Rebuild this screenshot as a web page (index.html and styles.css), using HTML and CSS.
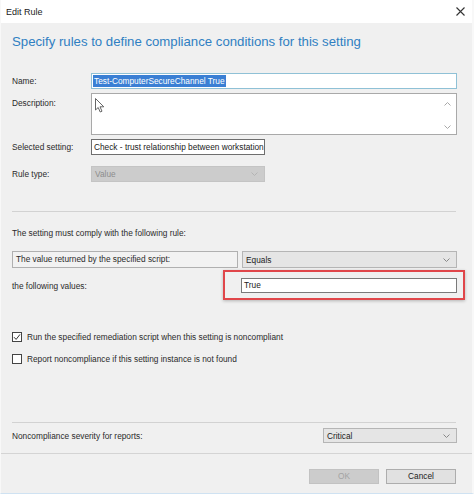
FILE: index.html
```html
<!DOCTYPE html>
<html>
<head>
<meta charset="utf-8">
<link rel="stylesheet" href="styles.css">
</head>
<body>
<div class="window">
  <div class="titlebar">
    <span class="title">Edit Rule</span>
    <svg class="close" width="9" height="9" viewBox="0 0 9 9"><path d="M0.5 0.5 L8.5 8.5 M8.5 0.5 L0.5 8.5" stroke="#333" stroke-width="1.1" fill="none"/></svg>
  </div>
  <div class="dialog">
    <div class="content">
      <div class="heading">Specify rules to define compliance conditions for this setting</div>

      <div class="row row-name">
        <div class="label">Name:</div>
        <div class="field field-focus"><span class="sel">Test-ComputerSecureChannel True</span></div>
      </div>
      <div class="row row-desc">
        <div class="label label-top">Description:</div>
        <div class="field field-area">
          <svg class="cursor" width="10" height="15" viewBox="0 0 10 15"><path d="M0.5 0.5 L0.5 12 L3.2 9.5 L5.2 14 L7 13.2 L5 8.8 L8.8 8.8 Z" fill="#fff" stroke="#555" stroke-width="0.9" stroke-linejoin="round"/></svg>
          <svg class="scroll scroll-up" width="7" height="4" viewBox="0 0 7 4"><path d="M0.5 3.5 L3.5 0.5 L6.5 3.5" stroke="#a8a8a8" fill="none"/></svg>
          <svg class="scroll scroll-down" width="7" height="4" viewBox="0 0 7 4"><path d="M0.5 0.5 L3.5 3.5 L6.5 0.5" stroke="#a8a8a8" fill="none"/></svg>
        </div>
      </div>
      <div class="row row-selected">
        <div class="label">Selected setting:</div>
        <div class="field field-short">Check - trust relationship between workstation</div>
      </div>
      <div class="row row-type">
        <div class="label">Rule type:</div>
        <div class="combo combo-disabled field-short"><span>Value</span>
          <svg width="7" height="4" viewBox="0 0 7 4"><path d="M0.5 0.5 L3.5 3.5 L6.5 0.5" stroke="#b4b4b4" fill="none"/></svg>
        </div>
      </div>

      <div class="sep sep-1"></div>
      <div class="text text-comply">The setting must comply with the following rule:</div>

      <div class="row row-script">
        <div class="box-static">The value returned by the specified script:</div>
        <div class="combo combo-wide"><span>Equals</span>
          <svg width="7" height="4" viewBox="0 0 7 4"><path d="M0.5 0.5 L3.5 3.5 L6.5 0.5" stroke="#888" fill="none"/></svg>
        </div>
      </div>
      <div class="row row-values">
        <div class="label-wide">the following values:</div>
        <div class="highlight-wrap">
          <div class="field field-value">True</div>
        </div>
      </div>

      <div class="check-row check-1">
        <span class="checkbox"><svg width="8" height="8" viewBox="0 0 8 8"><path d="M1 4.2 L3.1 6.4 L7 1.4" stroke="#333" stroke-width="1" fill="none"/></svg></span>
        <span>Run the specified remediation script when this setting is noncompliant</span>
      </div>
      <div class="check-row check-2">
        <span class="checkbox"></span>
        <span>Report noncompliance if this setting instance is not found</span>
      </div>

      <div class="sep sep-2"></div>
      <div class="row row-severity">
        <div class="label-wide">Noncompliance severity for reports:</div>
        <div class="combo combo-severity"><span>Critical</span>
          <svg width="7" height="4" viewBox="0 0 7 4"><path d="M0.5 0.5 L3.5 3.5 L6.5 0.5" stroke="#888" fill="none"/></svg>
        </div>
      </div>
    </div>
    <div class="footer">
      <div class="btn btn-disabled">OK</div>
      <div class="btn">Cancel</div>
    </div>
  </div>
</div>
</body>
</html>
```
FILE: styles.css
```css
* { box-sizing: border-box; }
html, body { margin: 0; padding: 0; }
body {
  width: 474px;
  height: 494px;
  overflow: hidden;
  font-family: "Liberation Sans", Arial, sans-serif;
  font-size: 8.3px;
  color: #222;
  background: #f0f0f0;
}
.window {
  width: 474px;
  height: 494px;
  display: flex;
  flex-direction: column;
  border-left: 1px solid #f8f8f8;
  border-right: 2px solid #f8f8f8;
  border-bottom: 1px solid #cfe2f2;
}
.titlebar {
  height: 23px;
  flex: none;
  background: #fff;
  display: flex;
  align-items: center;
  justify-content: space-between;
  padding: 0 6px 0 5px;
}
.title { font-size: 9px; color: #222; }
.close { margin-right: 1px; }
.dialog {
  flex: 1;
  display: flex;
  flex-direction: column;
  background: #f0f0f0;
}
.content {
  padding: 0 15px 10px 11px;
}
.heading {
  padding-top: 12px;
  font-size: 13.2px;
  line-height: 14px;
  color: #2f7fc2;
  white-space: nowrap;
}
.row { display: flex; align-items: center; }
.label { width: 79px; flex: none; line-height: 10px; color: #2a2a2a; }
.label-top { align-self: flex-start; padding-top: 5px; }
.label-wide { flex: 1; color: #2a2a2a; line-height: 10px; }
.field {
  background: #fff;
  border: 1px solid #8c8c8c;
  height: 16px;
  line-height: 14px;
  padding: 0 2px;
  white-space: nowrap;
  overflow: hidden;
}
.row-name { margin-top: 24px; }
.row-name .field { flex: 1; }
.field-focus { border-color: #8fc1d6; padding: 1px 1px; line-height: 12px; }
.sel { display: inline-block; background: #3a7fd4; color: #fff; padding: 0 1px; height: 12px; }
.row-desc { margin-top: 4px; }
.field-area {
  flex: 1;
  height: 42px;
  border-color: #a9a9a9;
  position: relative;
}
.cursor { position: absolute; left: 3px; top: 4px; }
.scroll { position: absolute; right: 5px; }
.scroll-up { top: 8px; }
.scroll-down { bottom: 5px; }
.row-selected { margin-top: 4px; }
.field-short { width: 174px; flex: none; }
.row-selected .field { border-color: #6e6e6e; color: #222; }
.row-type { margin-top: 11px; }
.combo {
  height: 16px;
  display: flex;
  align-items: center;
  justify-content: space-between;
  padding: 0 6px 0 3px;
  border: 1px solid #b5b5b5;
  background: #e5e5e5;
}
.combo-disabled { background: #cccccc; border-color: #c4c4c4; color: #8c8c8c; }
.sep { height: 1px; background: #d2d2d2; margin-right: 1px; }
.sep-1 { margin-top: 29px; }
.text-comply { margin-top: 15px; line-height: 12px; color: #2a2a2a; }
.row-script { margin-top: 12px; }
.box-static {
  width: 226px;
  height: 17px;
  border: 1px solid #b0b0b0;
  background: #f2f2f2;
  line-height: 15px;
  padding: 0 3px;
  color: #2a2a2a;
  flex: none;
}
.combo-wide { flex: 1; margin-left: 4px; height: 17px; }
.row-values { margin-top: 10px; }
.highlight-wrap {
  width: 216px;
  flex: none;
  position: relative;
}
.highlight-wrap::after {
  content: "";
  position: absolute;
  left: -18px;
  right: -8px;
  top: -8px;
  bottom: -7px;
  border: 2px solid #e0464a;
  box-shadow: 0 1px 3px rgba(0,0,0,0.25);
  pointer-events: none;
}
.field-value { height: 15px; line-height: 13px; border-color: #7a7a7a; }
.check-row { display: flex; align-items: center; height: 12px; color: #2a2a2a; }
.check-1 { margin-top: 38px; }
.check-2 { margin-top: 10px; }
.checkbox {
  width: 10px;
  height: 10px;
  border: 1px solid #444;
  background: #fff;
  margin-right: 5px;
  display: flex;
  align-items: center;
  justify-content: center;
  flex: none;
}
.sep-2 { margin-top: 57px; }
.row-severity { margin-top: 5px; }
.combo-severity { width: 134px; flex: none; height: 15px; }
.footer {
  flex: 1;
  border-top: 1px solid #d4d4d4;
  display: flex;
  justify-content: flex-end;
  align-items: flex-start;
  padding: 15px 16px 0 0;
  gap: 7px;
}
.btn {
  width: 70px;
  height: 15px;
  line-height: 13px;
  text-align: center;
  border: 1px solid #adadad;
  background: #e1e1e1;
  color: #222;
}
.btn-disabled { background: #cccccc; border-color: #c2c2c2; color: #a3a3a3; }
```
